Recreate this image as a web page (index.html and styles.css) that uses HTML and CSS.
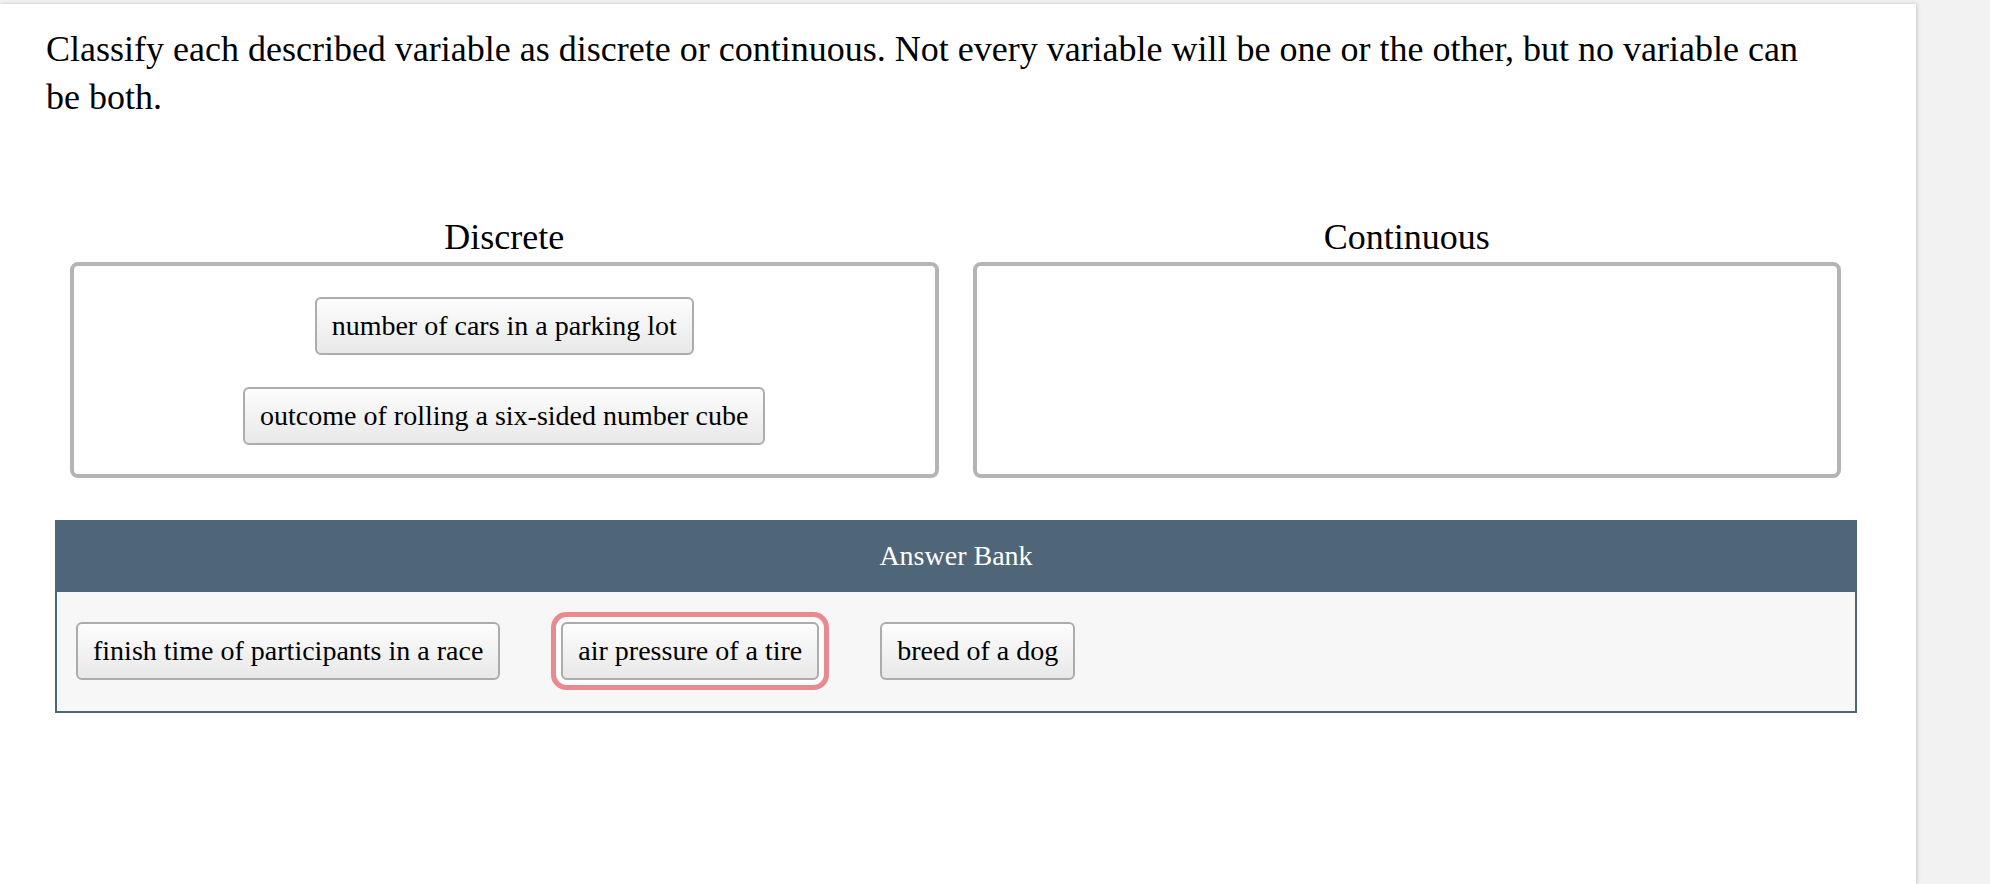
FILE: index.html
```html
<!DOCTYPE html>
<html lang="en">
<head>
<meta charset="utf-8">
<title>Classify variables</title>
<link rel="stylesheet" href="styles.css">
</head>
<body>
<div class="page">
  <p class="prompt">Classify each described variable as discrete or continuous. Not every variable will be one or the other, but no variable can be both.</p>
  <div class="question">
    <div class="zones">
      <div class="zone">
        <h2 class="zone-title">Discrete</h2>
        <div class="drop">
          <div class="tile">number of cars in a parking lot</div>
          <div class="tile">outcome of rolling a six-sided number cube</div>
        </div>
      </div>
      <div class="zone">
        <h2 class="zone-title">Continuous</h2>
        <div class="drop"></div>
      </div>
    </div>
    <div class="bank">
      <div class="bank-head">Answer Bank</div>
      <div class="bank-body">
        <div class="tile">finish time of participants in a race</div>
        <div class="tile tile-focus">air pressure of a tire</div>
        <div class="tile">breed of a dog</div>
      </div>
    </div>
  </div>
</div>
</body>
</html>
```
FILE: styles.css
```css
html, body {
  margin: 0;
  padding: 0;
}
body {
  background: #f2f2f2;
  font-family: "Liberation Serif", "Times New Roman", serif;
  color: #000;
  overflow: hidden;
}
.page {
  margin-top: 4px;
  width: 1916px;
  min-height: 880px;
  background: #fff;
  box-shadow: 1px 0 4px rgba(0, 0, 0, 0.18);
  box-sizing: border-box;
  padding-top: 21px;
}
.prompt {
  margin: 0;
  padding: 0 106px 0 46px;
  font-size: 36px;
  line-height: 48px;
}
.question {
  margin: 96px 0 0 55px;
  width: 1802px;
}
.zones {
  display: grid;
  grid-template-columns: 1fr 1fr;
  column-gap: 34px;
  padding: 0 16px 0 15px;
}
.zone-title {
  margin: 0 0 5px;
  font-size: 36px;
  line-height: 40px;
  font-weight: normal;
  text-align: center;
}
.drop {
  height: 216px;
  box-sizing: border-box;
  border: 4px solid #b4b4b4;
  border-radius: 8px;
  padding-top: 31px;
  display: flex;
  flex-direction: column;
  align-items: center;
  gap: 32px;
}
.tile {
  height: 58px;
  box-sizing: border-box;
  padding: 0 15px;
  border: 2px solid #acacac;
  border-radius: 6px;
  background: linear-gradient(#fdfdfd, #e8e8e8);
  font-size: 28px;
  line-height: 54px;
  white-space: nowrap;
}
.bank {
  margin-top: 42px;
  border: 2px solid #4f6679;
  border-top: 0;
}
.bank-head {
  background: #4f6679;
  color: #fff;
  font-size: 28px;
  line-height: 72px;
  height: 72px;
  text-align: center;
  margin: 0 -2px;
}
.bank-body {
  background: #f7f7f7;
  display: flex;
  align-items: flex-start;
  gap: 61px;
  padding: 30px 19px 31px;
}
.tile-focus {
  box-shadow: 0 0 0 5px #fff, 0 0 0 10px #e98a91;
}
```
